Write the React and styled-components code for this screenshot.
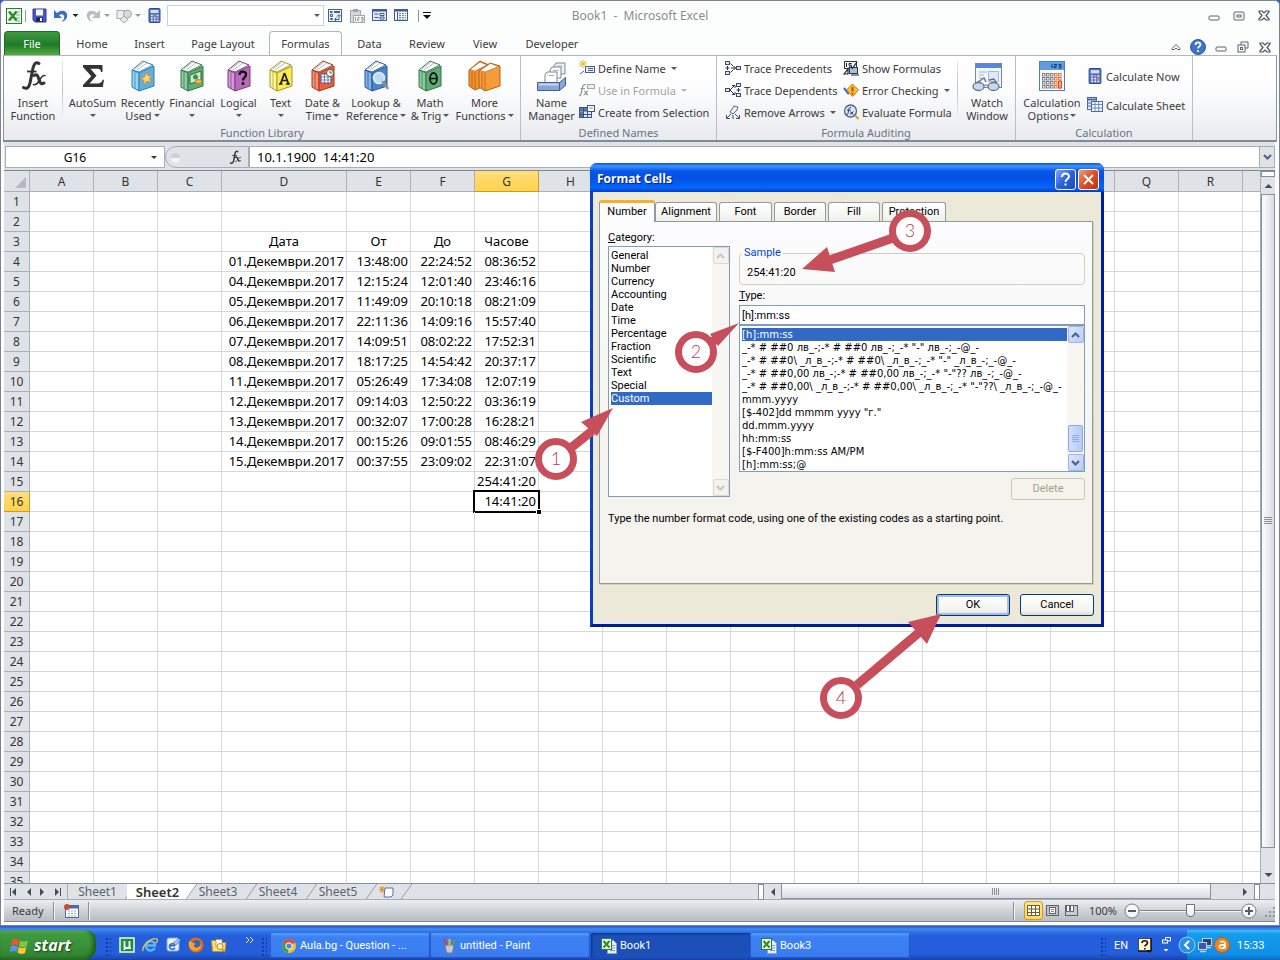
import React from "react";
import styled, { createGlobalStyle, css } from "styled-components";

const ui = `"Noto Sans", "Open Sans", sans-serif`;
const tahoma = `Roboto, "Noto Sans", sans-serif`;

const GlobalStyle = createGlobalStyle`
  *, *::before, *::after { box-sizing: border-box; }
  body { margin: 0; background: #245edb; font-family: ${ui}; font-size: 11px; color: #3b3b3b; overflow: hidden; }
  button, input, select { font: inherit; color: inherit; margin: 0; padding: 0; border: 0; background: none; border-radius: 0; }
  button { cursor: default; white-space: nowrap; }
  svg { display: block; flex: none; }
  ul { list-style: none; margin: 0; padding: 0; }
`;

const Page = styled.div`
  position: relative;
  height: 100vh;
  display: flex;
  flex-direction: column;
`;

const ExcelWindow = styled.main`
  flex: 1;
  min-height: 0;
  display: flex;
  flex-direction: column;
  background: #fcfdfd;
  border: 1px solid #7d8190;
  border-radius: 5px 5px 0 0;
  padding: 0 2px 3px;
`;

/* ---------- title bar ---------- */
const TitleBar = styled.header`
  display: grid;
  grid-template-columns: 1fr auto 1fr;
  align-items: center;
  height: 29px;
  flex: none;
`;
const Title = styled.h1`
  margin: 0;
  font-size: 12px;
  font-weight: 400;
  color: #8c8c8c;
  white-space: pre;
`;
const QuickAccess = styled.div`
  display: flex;
  align-items: center;
  padding-left: 2px;
`;
const QatButton = styled.button`
  width: ${(p) => p.$w}px;
  height: 20px;
  display: flex;
  align-items: center;
  justify-content: center;
  gap: 3px;
`;
const Divider = styled.span`
  width: 1px;
  height: 12px;
  background: #8e949c;
  margin: 0 3px;
`;
const Combo = styled.div`
  position: relative;
  width: 157px;
  margin: 0 3px;
  svg { position: absolute; right: 4px; top: 9px; pointer-events: none; }
`;
const ComboSelect = styled.select`
  display: block;
  width: 100%;
  height: 21px;
  appearance: none;
  background: #fff;
  border: 1px solid #ccd0d6;
`;
const WindowControls = styled.div`
  display: flex;
  justify-content: flex-end;
  align-items: center;
  gap: 9px;
  padding-right: ${(p) => p.$end}px;
  margin-left: auto;
`;
const ControlButton = styled.button`
  width: ${(p) => p.$w || 16}px;
  height: 16px;
  display: grid;
  place-items: center;
`;

/* ---------- ribbon ---------- */
const TabRow = styled.nav`
  display: flex;
  align-items: flex-end;
  height: 25px;
  flex: none;
  padding-left: 1px;
`;
const RibbonTab = styled.button`
  width: ${(p) => p.$w}px;
  height: 24px;
  text-align: center;
  ${(p) => p.$file && css`
    color: #fff;
    background: linear-gradient(#3f9a43, #1f7a28 55%, #52ad3f);
    border: 1px solid #1e6b27;
    border-bottom: 0;
    border-radius: 4px 4px 0 0;
    margin-right: 2px;
  `}
  ${(p) => p.$active && css`
    background: #fff;
    border: 1px solid #b0b6be;
    border-bottom: 0;
    border-radius: 4px 4px 0 0;
    margin-bottom: -1px;
    height: 25px;
    padding-bottom: 1px;
  `}
`;
const Ribbon = styled.section`
  display: flex;
  height: 87px;
  flex: none;
  border: 1px solid #8a919c;
  border-top-color: #b0b6be;
  border-bottom: 2px solid #838a94;
  background: linear-gradient(#fff 0, #fdfdfe 40%, #e7eaee 100%);
`;
const Group = styled.div`
  width: ${(p) => p.$w}px;
  display: flex;
  flex-direction: column;
  border-right: 1px solid #b9bec6;
`;
const GroupBody = styled.div`
  display: flex;
  flex: 1;
  padding-left: ${(p) => p.$pad || 0}px;
`;
const GroupLabel = styled.div`
  height: 16px;
  line-height: 16px;
  margin-bottom: -1px;
  text-align: center;
  color: #6b7280;
`;
const BigButton = styled.button`
  width: ${(p) => p.$w}px;
  height: 67px;
  display: flex;
  flex-direction: column;
  align-items: center;
  padding-top: 4px;
  line-height: 13px;
  svg.big { margin-bottom: 4px; }
`;
const LabelLine = styled.span`
  display: flex;
  align-items: center;
  justify-content: center;
  gap: 2px;
  height: 13px;
`;
const GroupSplit = styled.span`
  width: 1px;
  height: 56px;
  margin: 5px 4px 0 0;
  background: linear-gradient(#e9ebee, #b9bec6, #e9ebee);
`;
const SmallColumn = styled.div`
  width: ${(p) => p.$w}px;
  display: flex;
  flex-direction: column;
  padding-top: ${(p) => p.$top || 1}px;
  gap: ${(p) => p.$gap || 0}px;
`;
const SmallButton = styled.button`
  display: flex;
  align-items: center;
  gap: 3px;
  height: 22px;
  ${(p) => p.$muted && "color:#a3a3a3;"}
  svg + span + svg { margin-left: 2px; }
`;

/* ---------- formula bar ---------- */
const FormulaBar = styled.section`
  display: flex;
  height: 29px;
  flex: none;
  padding: 4px 0 3px 1px;
  margin: 0 2px 0 1px;
  background: #dfe3e8;
  border-bottom: 1px solid #7f8792;
`;
const NameBox = styled.div`
  display: flex;
  align-items: center;
  width: 160px;
  height: 22px;
  background: #fff;
  border: 1px solid #a6adb7;
`;
const NameInput = styled.input`
  width: 138px;
  margin-right: 6px;
  text-align: center;
  color: #000;
  font-size: 12px;
`;
const FxArea = styled.div`
  width: 84px;
  height: 22px;
  display: flex;
  align-items: center;
  justify-content: space-between;
  padding: 0 6px 0 4px;
  border: 1px solid #a6adb7;
  border-radius: 11px 0 0 11px;
  background: #dfe3e8;
`;
const FormulaInput = styled.input`
  flex: 1;
  height: 22px;
  padding-left: 7px;
  background: #fff;
  border: 1px solid #a6adb7;
  font-size: 13px;
  color: #000;
`;
const ExpandButton = styled.button`
  width: 15px;
  height: 22px;
  border: 1px solid #a6adb7;
  border-left: 0;
  display: grid;
  place-items: center;
`;

/* ---------- grid ---------- */
const SheetArea = styled.section`
  flex: 1;
  min-height: 0;
  display: flex;
  margin: 0 2px 0 1px;
`;
const GridView = styled.div`
  flex: 1;
  min-width: 0;
  overflow: hidden;
  background: #fff;
`;
const Table = styled.table`
  table-layout: fixed;
  border-collapse: separate;
  border-spacing: 0;
  width: 1303px;
  color: #000;
  font-size: 13px;
`;
const Head = styled.th`
  height: ${(p) => (p.$top ? 21 : 20)}px;
  padding: 0;
  font-size: 12px;
  font-weight: 400;
  line-height: 17px;
  color: #333;
  background: ${(p) => (p.$on ? "linear-gradient(#ffdf7d, #ffd24a)" : "#dfe3e8")};
  border-right: 1px solid ${(p) => (p.$on ? "#c99a2c" : "#aab0b9")};
  border-bottom: 1px solid ${(p) => (p.$on ? "#c99a2c" : "#aab0b9")};
`;
const Corner = styled(Head)`
  svg { margin: 2px 3px 0 auto; }
`;
const Cell = styled.td`
  position: relative;
  height: 20px;
  padding: 0 ${(p) => (p.$center ? 0 : 2)}px 0 0;
  line-height: 17px;
  white-space: nowrap;
  text-align: ${(p) => (p.$center ? "center" : "right")};
  border-right: 1px solid #d5d7db;
  border-bottom: 1px solid #d5d7db;
  ${(p) => p.$selected && css`
    &::after {
      content: "";
      position: absolute;
      inset: -2px;
      border: 2px solid #000;
    }
    &::before {
      content: "";
      position: absolute;
      right: -4px;
      bottom: -4px;
      width: 6px;
      height: 6px;
      z-index: 1;
      background: #000;
      border: 1px solid #fff;
    }
  `}
`;
const VScroll = styled.div`
  width: 15px;
  display: flex;
  flex-direction: column;
  align-items: center;
  background: #dfe3e8;
  border-left: 1px solid #a6adb7;
`;
const SplitHandle = styled.span`
  width: ${(p) => (p.$v ? 6 : 14)}px;
  height: ${(p) => (p.$v ? 16 : 6)}px;
  border: 1px solid #858c96;
  background: #fff;
  flex: none;
`;
const ArrowSlot = styled.button`
  width: ${(p) => p.$w || 14}px;
  height: ${(p) => p.$h || 17}px;
  display: grid;
  place-items: center;
  flex: none;
`;
const ScrollThumb = styled.div`
  flex: ${(p) => p.$grow};
  width: 14px;
  display: grid;
  place-items: center;
  border: 1px solid #8a919c;
  background: linear-gradient(90deg, #fdfdfe, #d8dce2);
`;
const ScrollGap = styled.span`
  flex: ${(p) => p.$grow};
`;

/* ---------- sheet tabs ---------- */
const TabStrip = styled.section`
  display: flex;
  align-items: stretch;
  height: 17px;
  flex: none;
  margin: 0 2px 0 1px;
  background: #dfe3e8;
  border-top: 1px solid #8a919c;
  border-bottom: 1px solid #a6adb7;
`;
const SheetNav = styled.div`
  display: flex;
  align-items: center;
  width: 64px;
  border-right: 1px solid #a6adb7;
`;
const SheetTab = styled.button`
  position: relative;
  width: ${(p) => p.$w || 60}px;
  font-size: ${(p) => (p.$on ? 13 : 12)}px;
  font-weight: ${(p) => (p.$on ? 600 : 400)};
  line-height: 14px;
  text-align: center;
  color: ${(p) => (p.$on ? "#333" : "#5b626c")};
  svg { margin: 0 auto; }
  ${(p) => p.$on && css`
    z-index: 1;
    &::before {
      content: "";
      position: absolute;
      z-index: -1;
      inset: 0 -9px 0 0;
      background: #fff;
      clip-path: polygon(0 0, 100% 0, calc(100% - 10px) 100%, 0 100%);
    }
  `}
  &::after {
    content: "";
    position: absolute;
    right: -4px;
    top: 0;
    width: 1px;
    height: 15px;
    background: #959ca6;
    transform: skewX(-35deg);
  }
`;
const HScroll = styled.div`
  display: flex;
  align-items: center;
  width: 517px;
  margin-left: auto;
  padding-right: 15px;
`;
const HThumb = styled.div`
  width: 430px;
  height: 15px;
  border: 1px solid #8a919c;
  border-top: 0;
  background: linear-gradient(#fdfdfe, #d8dce2);
  display: grid;
  place-items: center;
`;

/* ---------- status bar ---------- */
const StatusBar = styled.footer`
  display: flex;
  align-items: center;
  height: 22px;
  flex: none;
  margin: 0 2px 0 1px;
  padding-left: 8px;
  background: linear-gradient(#eceef1, #cdd0d5 55%, #b9bdc3);
  border-bottom: 1px solid #83888f;
`;
const StatusDivider = styled.span`
  width: 2px;
  height: 18px;
  border-left: 1px solid #8a9098;
  border-right: 1px solid #f2f3f5;
  margin: 0 9px;
`;
const ViewButton = styled.button`
  width: 19px;
  height: 19px;
  display: grid;
  place-items: center;
  border-radius: 3px;
  ${(p) => p.$on && "background: linear-gradient(#ffe48c, #ffd65a); border: 1px solid #c79a33;"}
`;
const ZoomArea = styled.div`
  display: flex;
  align-items: center;
  margin-left: auto;
`;
const ZoomLabel = styled.span`
  margin: 0 7px 0 8px;
`;
const ZoomRange = styled.input`
  appearance: none;
  width: 101px;
  height: 14px;
  background: linear-gradient(transparent 6px, #7f858e 6px, #7f858e 7px, #f3f4f6 7px, #f3f4f6 8px, transparent 8px);
  &::-webkit-slider-thumb {
    appearance: none;
    width: 9px;
    height: 13px;
    background: linear-gradient(#fff, #eceef1);
    border: 1px solid #6c727b;
    border-radius: 1px 1px 5px 5px;
  }
`;

/* ---------- dialog ---------- */
const Dialog = styled.section`
  position: absolute;
  left: 590px;
  top: 163px;
  width: 514px;
  font-family: ${tahoma};
  color: #000;
  line-height: 14px;
  background: #ece9d8;
  border: 3px solid;
  border-top: 0;
  border-color: #0a3fc4 #001d9c #001d9c #0a3fc4;
  border-radius: 7px 7px 0 0;
`;
const DialogTitle = styled.header`
  display: flex;
  align-items: center;
  height: 29px;
  margin: 0 -3px;
  padding: 3px 5px 0 7px;
  gap: 2px;
  border-radius: 7px 7px 0 0;
  background: linear-gradient(#0a50c8 0, #3d95ff 3px, #0a58e8 8px, #0450e0 50%, #0366ff 85%, #0340c0 100%);
  color: #fff;
  h2 { flex: 1; margin: 0; font: bold 12px/16px "Open Sans", ${ui}; text-shadow: 1px 1px 1px #0a1883; }
`;
const CaptionButton = styled.button`
  width: 21px;
  height: 21px;
  display: grid;
  place-items: center;
  border: 1px solid #fff;
  border-radius: 3px;
  background: ${(p) => (p.$close ? "linear-gradient(135deg,#f09a80,#dd4f27 50%,#b93412)" : "linear-gradient(135deg,#7fa5f5,#2c62dd 50%,#1c49c0)")};
`;
const DialogBody = styled.div`
  padding: 8px 8px 7px 6px;
  border: solid #dcebfb;
  border-width: 0 0 1px;
`;
const DialogTabs = styled.div`
  display: flex;
  align-items: flex-end;
  gap: 2px;
  height: 21px;
`;
const DialogTab = styled.button`
  width: ${(p) => p.$w}px;
  height: 19px;
  background: linear-gradient(#fff, #f0f0ea);
  border: 1px solid #919b9c;
  border-bottom: 0;
  border-radius: 3px 3px 0 0;
  ${(p) => p.$on && css`
    position: relative;
    height: 22px;
    margin: 0 -2px -1px 0;
    background: #fcfcfe;
    border-top: 3px solid #f5b02c;
    padding-bottom: 1px;
  `}
`;
const Panel = styled.div`
  padding: 9px 7px 57px 8px;
  background: linear-gradient(#fcfcfe, #f4f3ee 70%);
  border: 1px solid #919b9c;
  box-shadow: 1px 1px 0 #d0cebf;
`;
const Columns = styled.div`
  display: grid;
  grid-template-columns: 122px 1fr;
  gap: 9px;
`;
const FieldLabel = styled.label`
  display: block;
  height: 14px;
  margin-bottom: ${(p) => p.$gap || 1}px;
`;
const ListBox = styled.div`
  display: flex;
  height: ${(p) => p.$h}px;
  background: #fff;
  border: 1px solid #7f9db9;
  padding: 2px 0 0 2px;
  ul { flex: 1; min-width: 0; overflow: hidden; }
  ${(p) => p.$codes && `ul { font-family: "DejaVu Sans", ${tahoma}; font-size: 10px; }`}
`;
const Option = styled.li`
  height: 13px;
  line-height: 13px;
  white-space: pre;
  ${(p) => p.$on && "background:#316ac5; color:#fff;"}
`;
const XpScroll = styled.div`
  width: 17px;
  margin-top: -2px;
  display: flex;
  flex-direction: column;
  align-items: center;
  justify-content: space-between;
  background: #f7f6f1;
`;
const XpArrow = styled.button`
  width: 16px;
  height: 17px;
  display: grid;
  place-items: center;
  border: 1px solid ${(p) => (p.$off ? "#dcdad0" : "#9db5e6")};
  border-radius: 2px;
  background: ${(p) => (p.$off ? "#f3f2ec" : "linear-gradient(135deg,#dce6fd,#b6cbf9)")};
`;
const XpThumb = styled.div`
  width: 15px;
  height: 27px;
  margin: auto 0 2px;
  display: grid;
  place-items: center;
  border: 1px solid #8fa9e6;
  border-radius: 2px;
  background: linear-gradient(90deg, #d3defc, #b6cbf9);
`;
const Sample = styled.fieldset`
  height: 39px;
  margin: 15px 0 4px;
  padding: 6px 7px 0;
  border: 1px solid #d0d0bf;
  border-radius: 4px;
  legend { color: #0046d5; padding: 0 2px; margin-left: -5px; }
`;
const TypeInput = styled.input`
  display: block;
  width: 100%;
  height: 20px;
  padding: 0 2px;
  background: #fff;
  border: 1px solid #7f9db9;
`;
const XpButton = styled.button`
  display: block;
  width: 74px;
  height: 22px;
  border: 1px solid #003c74;
  border-radius: 3px;
  background: linear-gradient(#fff, #f3f2ec 80%, #dcd8cc);
  ${(p) => p.$focus && "box-shadow: inset 0 0 0 2px #a3bff0;"}
  ${(p) => p.$end && "margin: 6px 0 0 auto;"}
  &:disabled { color: #a1a192; border-color: #c9c7ba; background: #f5f4ea; }
`;
const Hint = styled.p`
  margin: 12px 0 0;
  white-space: nowrap;
`;
const DialogActions = styled.div`
  display: flex;
  justify-content: flex-end;
  gap: 10px;
  margin: 10px -1px 0 0;
`;

/* ---------- taskbar ---------- */
const Taskbar = styled.footer`
  display: flex;
  align-items: stretch;
  height: 34px;
  flex: none;
  font-family: ${tahoma};
  color: #fff;
  background: linear-gradient(#1e56c4 0, #3f8cf3 3px, #2f72e6 6px, #245edb 10px, #245edb 28px, #1941a5 100%);
`;
const StartButton = styled.button`
  display: flex;
  align-items: center;
  gap: 5px;
  width: 96px;
  margin-top: 4px;
  padding-left: 10px;
  border-radius: 0 10px 12px 0;
  background: linear-gradient(#6bb66a 0, #3f9a3f 4px, #388f38 60%, #2e7d2e 100%);
  box-shadow: inset -3px -1px 4px #1d5a1f;
  font: italic bold 16px/20px "Open Sans", ${ui};
  text-shadow: 1px 1px 2px #113c12;
`;
const Grip = styled.span`
  width: 5px;
  height: 18px;
  margin: 12px ${(p) => p.$after || 8}px 0 ${(p) => p.$before || 10}px;
  background: radial-gradient(circle at 1px 1px, #123f9c 1px, transparent 1px) 0 0 / 4px 4px;
`;
const QuickLaunch = styled.div`
  display: flex;
  align-items: center;
  gap: 7px;
  padding-top: 4px;
`;
const Tasks = styled.nav`
  display: flex;
  flex: 1;
  gap: 1px;
  padding: 7px 0 2px;
  min-width: 0;
`;
const Task = styled.button`
  display: flex;
  align-items: center;
  gap: 3px;
  flex: 0 1 159px;
  padding-left: 10px;
  border-radius: 2px;
  background: ${(p) => (p.$on ? "#1c50b8" : "linear-gradient(#5a9bfb, #3c81f3 4px, #3a7cf0)")};
  box-shadow: ${(p) => (p.$on ? "inset 1px 1px 2px #0c3180" : "inset -1px -1px 1px #2457c0")};
`;
const LangBar = styled.div`
  display: flex;
  align-items: center;
  gap: 10px;
  padding: 4px 16px 0 0;
`;
const Tray = styled.div`
  display: flex;
  align-items: center;
  gap: 1px;
  width: 93px;
  margin-top: 4px;
  background: linear-gradient(#3fc0f8, #139cec 4px, #0f8fe8 80%, #0c6cc0);
  svg:first-child { margin-left: -9px; }
  span { margin-left: 6px; }
`;

const CalloutSvg = styled.svg`
  position: absolute;
  pointer-events: none;
  font-family: Lato, ${ui};
  font-weight: 300;
  font-size: 18px;
`;

/* ---------- drawings ---------- */
const Caret = ({ c = "#555", w = 6 }) => (
  <svg width={w} height="3" viewBox="0 0 6 3" aria-hidden="true"><path d="M0 0h6L3 3z" fill={c} /></svg>
);
const Svg = ({ s = 16, w, h, vb, children, ...r }) => (
  <svg width={w || s} height={h || s} viewBox={vb || `0 0 ${w || s} ${h || s}`} fill="none" aria-hidden="true" {...r}>{children}</svg>
);
const Excel = () => (
  <Svg><rect x=".5" y=".5" width="15" height="15" fill="#eef7ec" stroke="#2b7a35" /><path d="M10 4h4M10 7h4M10 10h4M10 13h4" stroke="#7dbb7b" /><path d="M3 3.500l7.500 9M10.500 3.500 3 12.500" stroke="#2f8a2f" strokeWidth="2.600" /></Svg>
);
const ExcelDoc = () => (
  <Svg><path d="M6.500 2.500h6l3 3v10h-9z" fill="#e8eff9" stroke="#8aa2c8" /><path d="M11 7.500h3M11 10h3M9 12.500h5" stroke="#7d98c4" /><rect x=".5" y=".5" width="10" height="11" fill="#eef7ec" stroke="#2b7a35" /><path d="m2.500 3 6 6.500M8.500 3l-6 6.500" stroke="#2f8a2f" strokeWidth="2" /></Svg>
);
const Save = () => (
  <Svg s={15}><path d="M1 1h13v13H3l-2-2z" fill="#4a55c8" stroke="#2f3a9d" /><rect x="4" y="1.500" width="7" height="6" fill="#f4f6fd" /><rect x="4" y="9.500" width="7" height="4" fill="#1d2450" /><rect x="8" y="10" width="2" height="3" fill="#fff" /></Svg>
);
const Undo = ({ c = "#3a6fc4", flip }) => (
  <Svg><g transform={flip ? "translate(16 0) scale(-1 1)" : undefined}><path d="M1 2v8h8L6.200 7.200c2-1.800 5-1 5 1.800 0 2-1 3.500-3 5 4-1 6-3.500 6-6.500C14.200 3 8.500 1 4 5z" fill={c} /></g></Svg>
);
const Shapes = () => (
  <Svg><path d="M1 2.500h9v8H1z" fill="#eceef0" stroke="#a5a8ad" /><circle cx="11.500" cy="6" r="4" fill="#d7d9dc" stroke="#a5a8ad" /><path d="m8 8 4 3.500L8 15l-4-3.500z" fill="#e6e8ea" stroke="#a5a8ad" /></Svg>
);
const Calc = ({ s = 15 }) => (
  <Svg s={s} vb="0 0 15 15"><rect x="2" y=".5" width="11" height="14" rx="1" fill="#4f74bd" stroke="#304f91" /><rect x="3.500" y="2" width="8" height="3" fill="#cfe0fa" /><path d="M4 7.500h8M4 10h8M4 12.500h8" stroke="#f3f6fd" strokeWidth="1.500" strokeDasharray="1.700 1.200" /><path d="M6.900 7.500h2M9.800 10h2" stroke="#e36b63" strokeWidth="1.500" /></Svg>
);
const QatPivot = () => (
  <Svg s={15}><rect x=".5" y="1.500" width="13" height="12" fill="#eef3fb" stroke="#45608f" /><path d="M2 4h2.500M6 4h6" stroke="#45608f" strokeWidth="2" /><path d="M2.500 6.500h2v2h-2zM2.500 10.500h2v1h-2zM7 11.500h4V7M9 8.500l2-2 2 2M8.500 9.500l-2 2 2 2" stroke="#45608f" /></Svg>
);
const QatPaste = () => (
  <Svg><rect x="1.500" y="2.500" width="10" height="12" fill="#d5d7da" stroke="#a2a5a9" /><rect x="4" y="1" width="5" height="3" fill="#a2a5a9" /><rect x="4.500" y="7.500" width="11" height="7" fill="#f6f6f7" stroke="#a2a5a9" /><path d="M6.500 9v4M8.500 9.500H10v1.500H8.500v1.500H10M12 9.500h2V13h-2M12 11h2" stroke="#85888d" strokeWidth=".8" /></Svg>
);
const QatForm = () => (
  <Svg s={15}><rect x=".5" y="1.500" width="14" height="11" fill="#dfe9f8" stroke="#3f5c96" /><path d="M.5 2.500h14" stroke="#3f5c96" strokeWidth="2" /><path d="M2.500 6h4M2.500 9.500h4" stroke="#3f5c96" /><path d="M8 5.500h4v2H8zM8 9h4v2H8z" stroke="#3f5c96" fill="#fff" /></Svg>
);
const QatTable = () => (
  <Svg s={15}><rect x=".5" y="1.500" width="13" height="11" fill="#f3f7fd" stroke="#3f5c96" /><path d="M.5 2.500h13" stroke="#3f5c96" strokeWidth="2" /><path d="M3.500 4v8" stroke="#3f5c96" /><path d="M5 5.500h7M5 7.500h7M5 9.500h7M5 11.200h7" stroke="#6b86ba" strokeDasharray="2 1" /></Svg>
);
const MinGlyph = () => <Svg w={12} h={10}><rect x="1" y="5" width="10" height="4" rx="1" stroke="#5b6470" /></Svg>;
const MaxGlyph = () => <Svg w={12} h={10}><rect x="1" y="1" width="10" height="8" rx="1" stroke="#5b6470" /><rect x="4" y="4" width="4" height="2" stroke="#5b6470" /></Svg>;
const RestoreGlyph = () => <Svg w={12} h={12}><path d="M4 4V1h7v6H8" stroke="#5b6470" /><rect x="1" y="4" width="7" height="7" stroke="#5b6470" /><rect x="3.500" y="6.500" width="2" height="2" stroke="#5b6470" /></Svg>;
const CloseGlyph = () => <Svg w={12} h={11}><path d="M1 1h3l2 2 2-2h3v1L8 5.500 11 9v1H8L6 8l-2 2H1V9l3-3.500L1 2z" stroke="#4b5460" strokeWidth="1.200" /></Svg>;
const HelpGlyph = () => (
  <Svg><circle cx="8" cy="8" r="7.500" fill="#3f74c8" stroke="#2c5aa8" /><path d="M5.500 6c0-3.500 5-3.200 5-.4C10.500 7.500 8 7.500 8 9.500" stroke="#fff" strokeWidth="1.700" /><circle cx="8" cy="12" r="1.100" fill="#fff" /></Svg>
);

const Fx = ({ w = 28, h = 32, ...r }) => (
  <Svg w={w} h={h} vb="0 0 28 32" {...r}>
    <path d="M20 3.500c-3-2-5 0-6 4.500L11 23c-.9 4.500-3.500 6.500-6.500 4.500" stroke="#333" strokeWidth="3" strokeLinecap="round" />
    <path d="M8 11.500h9.500" stroke="#333" strokeWidth="1.800" />
    <path d="M15 15.500c3.500-2 4 1 5 4s2 5.500 5 3.500" stroke="#333" strokeWidth="3" strokeLinecap="round" />
    <path d="M26 15.500c-3-.6-4.500 3-6 5.500s-3 4.500-5.500 3.500" stroke="#333" strokeWidth="1.600" strokeLinecap="round" />
  </Svg>
);
const Sigma = () => (
  <Svg w={24} h={32} className="big"><path d="M2 5h19.500v7h-1.400c-.6-2.700-1.800-3.200-5-3.200H9.500l6 7-7 7.700h7.700c3.400 0 4.600-1.200 5.400-3.800H23L21.800 27H2v-2l8.300-8.800L2 7z" fill="#333" /></Svg>
);
const Book = ({ c, d, l, children }) => (
  <Svg w={26} h={32} className="big">
    <path d="M2 10 13 1l10 4L9 12z" fill="#fff" stroke={d} />
    <path d="m5 9 9-7M7 10l10-7" stroke="#b9bec5" />
    <path d="m2 10 7 3v18l-7-4z" fill={l} stroke={d} />
    <path d="M9 13 24 6v20L9 31z" fill={c} stroke={d} />
    <path d="M5 11.500v17" stroke={d} strokeWidth=".7" />
    {children}
  </Svg>
);
const books = {
  Recently: () => <Book c="#5fb0dc" d="#2f7fb0" l="#9ad3ee"><path d="m16.500 12 1.800 4 4.200-.8-3 3.300 2 4.500-4.300-2-3.500 4 .3-4.700-4-1.300 4.500-2z" fill="#ffd56e" stroke="#c8862a" strokeWidth=".8" /></Book>,
  Financial: () => <Book c="#5fae78" d="#34794a" l="#8fcba1"><path d="m11 15 11-4v9l-11 4z" fill="#cfe8c9" stroke="#2d6b3f" /><circle cx="16.500" cy="17" r="2.500" fill="#3e8f55" /><ellipse cx="19.500" cy="21.500" rx="3.500" ry="2" fill="#f0b83f" stroke="#a56f1c" strokeWidth=".7" /></Book>,
  Logical: () => <Book c="#b76bb8" d="#7f3d86" l="#d49ad4"><path d="M13.500 15c0-4.500 6.500-4.500 6.500-.5 0 3-3 3-3 6" stroke="#111" strokeWidth="2.300" /><circle cx="17" cy="23.500" r="1.500" fill="#111" /></Book>,
  Text: () => <Book c="#f8ec54" d="#a89a1e" l="#fbf6a0"><path d="m12.500 24 4-11M16.500 13l4 11" stroke="#222" strokeWidth="1.800" /><path d="M14 20.500h5M11 24h3.500M18 24h4" stroke="#222" strokeWidth="1.300" /></Book>,
  Date: () => <Book c="#ea5f38" d="#a8361a" l="#f29275"><path d="M11 14h10v9H11z" fill="#fff" stroke="#41609b" /><path d="M11 17h10M11 20h10M14.500 14v9M18 14v9" stroke="#41609b" strokeWidth=".7" /><circle cx="20" cy="13" r="3.500" fill="#fff" stroke="#555" /><path d="M20 11v2h2" stroke="#333" strokeWidth=".8" /></Book>,
  Lookup: () => <Book c="#4a86cc" d="#24549a" l="#86b4e6"><circle cx="16" cy="18" r="5.500" fill="#b9dcf6" stroke="#e3e9f1" strokeWidth="1.600" /><path d="m20 22 4.500 6" stroke="#8b9098" strokeWidth="2.600" strokeLinecap="round" /></Book>,
  Math: () => <Book c="#5fae78" d="#34794a" l="#8fcba1"><ellipse cx="16.500" cy="18.500" rx="3.500" ry="5.500" stroke="#111" strokeWidth="1.800" /><path d="M13.500 18.500h6" stroke="#111" strokeWidth="1.500" /></Book>,
};
const MoreBooks = () => (
  <Svg w={34} h={32} className="big">
    <path d="M1 10 12 1l9 4v19L7 30l-6-4z" fill="#f0932f" stroke="#b5621a" /><path d="M2 9.500 12 2l7 3L7 11z" fill="#fff" stroke="#b5621a" strokeWidth=".6" /><path d="M4 11.500V27M7 12v17" stroke="#b5621a" strokeWidth=".8" />
    <path d="m11 11 11-8 10 3v20l-15 5-6-4z" fill="#f79a3a" stroke="#b5621a" /><path d="m12 10.500 10.500-7 8 3L17 12z" fill="#fff" stroke="#b5621a" strokeWidth=".6" /><path d="M14 12v16M17 13v17" stroke="#b5621a" strokeWidth=".8" />
  </Svg>
);
const NameManager = () => (
  <Svg w={32} h={32} className="big">
    <path d="M20 3h9v11h-9l-2 1V6z" fill="#eef1f5" stroke="#7d8795" /><path d="M16 7h9v11h-9l-2 1V10z" fill="#f7f8fa" stroke="#7d8795" /><path d="M11 12h10v11H9v-8z" fill="#fff" stroke="#7d8795" /><path d="M21.500 6h5M17.500 10.500h5M12.500 15.500h6" stroke="#a8b0bc" />
    <path d="M1.500 22.500h22l6-5v8l-6 5h-22z" fill="#88a7d6" stroke="#41608f" /><path d="M23.500 22.500v8" stroke="#41608f" /><path d="M2.500 23.500h20v2h-20z" fill="#c3d5ee" />
  </Svg>
);
const DefineName = () => (
  <Svg><path d="M4 0v8M0 4h8M1 1l6 6M7 1 1 7" stroke="#e8b81f" /><rect x="6.500" y="6.500" width="9" height="6" fill="#e8eef8" stroke="#4a5f8c" /><path d="M9 8.500h5M9 10.500h5M1 14l4-3" stroke="#4a5f8c" /></Svg>
);
const UseFormula = () => (
  <Svg><path d="M7 3c-2-1-3 0-3.400 2L2 12c-.3 1.500-1 2-2 1.500M1.500 6.500H6M5 9c2 0 1.500 4 4 4M9 9c-2 0-2 4-4.500 4" stroke="#8d9096" strokeWidth="1.200" /><rect x="8.500" y="2.500" width="7" height="4" fill="#eee" stroke="#a3a6ab" /></Svg>
);
const CreateSel = () => (
  <Svg><rect x=".5" y="3.500" width="12" height="10" fill="#dfe7f4" stroke="#3d5482" /><path d="M1 4h11v3H1zM1 8h3v5H1z" fill="#5b76ab" /><path d="M1 7h12M1 10.500h12M4.500 4v9M8.500 4v9" stroke="#3d5482" /><rect x="8.500" y="1.500" width="7" height="6" fill="#fff" stroke="#3d5482" /><path d="M10 4h4" stroke="#7b8dae" /></Svg>
);
const Precedents = () => (
  <Svg><g fill="#dfe6f3" stroke="#3c4c6e"><rect x=".5" y="1.500" width="4" height="3" /><rect x=".5" y="11.500" width="4" height="3" /><rect x="11.500" y="6.500" width="4" height="3" /></g><path d="M2.500 6v4M.5 8h4M5.500 3.500 8 6M5.500 12.500 8 10M6 8h5M8.500 6l2 2-2 2" stroke="#26324f" /></Svg>
);
const Dependents = () => (
  <Svg><g fill="#dfe6f3" stroke="#3c4c6e"><rect x="11.500" y="1.500" width="4" height="3" /><rect x="11.500" y="11.500" width="4" height="3" /><rect x=".5" y="6.500" width="4" height="3" /></g><path d="M13.500 6v4M11.500 8h4M5 8l4-4M5 8l4 4M7 3.500h3V6M7 12.500h3V10" stroke="#26324f" /></Svg>
);
const RemoveArrows = () => (
  <Svg><path d="m5 8 4-6 4 1-1 3-4 4z" fill="#eef1f7" stroke="#56617c" /><path d="M6 10 2 14M1.500 11v3.500H5M8 11v4M10 10l4 4M14.500 11v3.500H11" stroke="#3c4c6e" /></Svg>
);
const ShowFormulas = () => (
  <Svg><rect x="1.500" y="1.500" width="12" height="7" fill="#eef2f9" stroke="#2c3750" /><path d="M3.500 3v4M8.500 3.500H6v1.700h2.500V7H6" stroke="#222" /><rect x="6.500" y="7.500" width="8" height="6" fill="#a9bde0" stroke="#2c3750" /><path d="m1 14 4-5v5zM8 15h8M14 2 9 9" stroke="#222" strokeWidth="1.200" /></Svg>
);
const ErrorCheck = () => (
  <Svg><path d="m1 6 4 5 5-8" stroke="#3f6dc0" strokeWidth="2.200" /><path d="m9.500 2 6 6-6 6.500-6-6.500z" fill="#fbc02c" stroke="#c27a10" /><path d="M9.500 5v4.500M9.500 10.800v1.700" stroke="#c0381a" strokeWidth="1.800" /></Svg>
);
const Evaluate = () => (
  <Svg><circle cx="7.500" cy="7" r="6" fill="#d7e6f8" stroke="#4a648f" strokeWidth="1.300" /><path d="M8 3.500C6 3 6 5 5.500 7S5 11 3.500 10.500M4 6h3.500M7 7.500l3.500 3M10.500 7.500l-3.500 3" stroke="#2c3750" /><path d="m12 11.500 3.500 3.500" stroke="#d79a2d" strokeWidth="2" /></Svg>
);
const Watch = () => (
  <Svg w={32} h={32} className="big"><rect x="4.500" y="3.500" width="26" height="24" fill="#f1f5fc" stroke="#6c86bb" /><path d="M5 4h25v4H5z" fill="#5a86d8" /><path d="M8 12h8M8 15h5M8 18h4" stroke="#9fb2d6" /><rect x="17.500" y="11.500" width="10" height="10" fill="#dfe8f7" stroke="#a9b9d8" /><path d="m4 24 9-6 2 4M26 24l-3-5-5 1" stroke="#69717e" strokeWidth="1.400" /><ellipse cx="7.500" cy="26.500" rx="5.500" ry="4" fill="#c3daf1" stroke="#6c7480" strokeWidth="1.300" /><ellipse cx="22.500" cy="26.500" rx="5.500" ry="4" fill="#c3daf1" stroke="#6c7480" strokeWidth="1.300" /><path d="M13 26c1-1.500 3-1.500 4 0" stroke="#6c7480" /></Svg>
);
const CalcOptions = () => (
  <Svg w={28} h={32} className="big"><rect x="1.500" y="1.500" width="25" height="29" fill="#fcfcfd" stroke="#4d7fc0" /><path d="M2 2h24v8H2z" fill="#5f9ce4" /><path d="M14 4v4M16 4.500h2.500V6H16v1.500h2.500M20.500 4.500H23V8h-2.500M20.500 6H23" stroke="#173a78" />{[13, 17, 21, 25].map((y) => [4, 8, 12, 16, 20].map((x) => <rect key={`${x}-${y}`} x={x + 0.5} y={y + 0.5} width="2.500" height="2.500" fill="#fff" stroke={x > 14 ? "#e0763a" : "#7b7f87"} />))}<path d="M20.500 21h3v7h-3z" fill="#f2a58f" stroke="#d8462a" /></Svg>
);
const CalcSheet = () => (
  <Svg><rect x=".5" y=".5" width="9" height="12" fill="#dfe9f8" stroke="#4c6ba6" /><path d="M1 2.500h9" stroke="#4c6ba6" strokeWidth="2" /><path d="M1 6h3M1 9h3" stroke="#4c6ba6" /><rect x="4.500" y="4.500" width="11" height="10" fill="#f6f9fe" stroke="#4c6ba6" /><path d="M5 7.500h10M5 11h10M8 5v9M11.700 5v9" stroke="#6f8cc2" /></Svg>
);
const Chevron = ({ up, c = "#4d6185" }) => <Svg w={9} h={6}><path d={up ? "m1 5 3.500-3.500L8 5" : "m1 1 3.500 3.500L8 1"} stroke={c} strokeWidth="2" /></Svg>;
const Tri = ({ dir, bar }) => {
  const d = { l: "M6 0v8L2 4z", r: "M1 0v8l4-4z", u: "M0 5h8L4 1z", d: "M0 1h8L4 5z" }[dir];
  const v = dir === "u" || dir === "d";
  return <Svg w={v ? 9 : 7} h={v ? 6 : 8} vb={v ? "0 0 8 6" : "0 0 7 8"}><path d={d} fill="#454b54" />{bar && <path d={dir === "l" ? "M.5 0v8" : "M6.500 0v8"} stroke="#454b54" />}</Svg>;
};

const bigButtons = [
  { w: 51, a: "AutoSum", caret: true, icon: <Sigma /> },
  { w: 49, a: "Recently", b: "Used", caret: true, icon: <books.Recently /> },
  { w: 50, a: "Financial", caret: true, icon: <books.Financial /> },
  { w: 43, a: "Logical", caret: true, icon: <books.Logical /> },
  { w: 41, a: "Text", caret: true, icon: <books.Text /> },
  { w: 43, a: "Date &", b: "Time", caret: true, icon: <books.Date /> },
  { w: 64, a: "Lookup &", b: "Reference", caret: true, icon: <books.Lookup /> },
  { w: 44, a: "Math", b: "& Trig", caret: true, icon: <books.Math /> },
  { w: 65, a: "More", b: "Functions", caret: true, icon: <MoreBooks /> },
];
const Big = ({ w, a, b, caret, icon }) => (
  <BigButton $w={w}>{icon}<LabelLine>{a}</LabelLine><LabelLine>{b && <span>{b}</span>}{caret && <Caret />}</LabelLine></BigButton>
);
const Small = ({ icon, text, caret, muted }) => (
  <SmallButton $muted={muted}>{icon}<span>{text}</span>{caret && <Caret c={muted ? "#b5b5b5" : "#555"} />}</SmallButton>
);

const columns = [..."ABCDEFGHIJKLMNOPQR", ""];
const cells = {
  3: ["Дата", "От", "До", "Часове"],
  4: ["01.Декември.2017", "13:48:00", "22:24:52", "08:36:52"],
  5: ["04.Декември.2017", "12:15:24", "12:01:40", "23:46:16"],
  6: ["05.Декември.2017", "11:49:09", "20:10:18", "08:21:09"],
  7: ["06.Декември.2017", "22:11:36", "14:09:16", "15:57:40"],
  8: ["07.Декември.2017", "14:09:51", "08:02:22", "17:52:31"],
  9: ["08.Декември.2017", "18:17:25", "14:54:42", "20:37:17"],
  10: ["11.Декември.2017", "05:26:49", "17:34:08", "12:07:19"],
  11: ["12.Декември.2017", "09:14:03", "12:50:22", "03:36:19"],
  12: ["13.Декември.2017", "00:32:07", "17:00:28", "16:28:21"],
  13: ["14.Декември.2017", "00:15:26", "09:01:55", "08:46:29"],
  14: ["15.Декември.2017", "00:37:55", "23:09:02", "22:31:07"],
  15: ["", "", "", "254:41:20"],
  16: ["", "", "", "14:41:20"],
};
const rows = Array.from({ length: 35 }, (_, i) => i + 1);

const categories = ["General", "Number", "Currency", "Accounting", "Date", "Time", "Percentage", "Fraction", "Scientific", "Text", "Special", "Custom"];
const formats = [
  "[h]:mm:ss",
  '_-* # ##0 лв_-;-* # ##0 лв_-;_-* "-" лв_-;_-@_-',
  '_-* # ##0\\ _л_в_-;-* # ##0\\ _л_в_-;_-* "-" _л_в_-;_-@_-',
  '_-* # ##0,00 лв_-;-* # ##0,00 лв_-;_-* "-"?? лв_-;_-@_-',
  '_-* # ##0,00\\ _л_в_-;-* # ##0,00\\ _л_в_-;_-* "-"??\\ _л_в_-;_-@_-',
  "mmm.yyyy",
  '[$-402]dd mmmm yyyy "г."',
  "dd.mmm.yyyy",
  "hh:mm:ss",
  "[$-F400]h:mm:ss AM/PM",
  "[h]:mm:ss;@",
];

function FormatCells() {
  return (
    <Dialog role="dialog" aria-label="Format Cells">
      <DialogTitle>
        <h2>Format Cells</h2>
        <CaptionButton aria-label="Help"><Svg w={13} h={15}><path d="M3 5c0-4.500 7-4.500 7-.5C10 7 6.500 7 6.500 10" stroke="#fff" strokeWidth="2" /><path d="M5.500 11.500h2v2h-2z" fill="#fff" /></Svg></CaptionButton>
        <CaptionButton $close aria-label="Close"><Svg s={13}><path d="m2 2 9 9M11 2l-9 9" stroke="#fff" strokeWidth="2" /></Svg></CaptionButton>
      </DialogTitle>
      <DialogBody>
        <DialogTabs>
          <DialogTab $on $w={56}>Number</DialogTab>
          <DialogTab $w={62}>Alignment</DialogTab>
          <DialogTab $w={53}>Font</DialogTab>
          <DialogTab $w={52}>Border</DialogTab>
          <DialogTab $w={52}>Fill</DialogTab>
          <DialogTab $w={64}>Protection</DialogTab>
        </DialogTabs>
        <Panel>
          <Columns>
            <div>
              <FieldLabel id="category"><u>C</u>ategory:</FieldLabel>
              <ListBox $h={251}>
                <ul role="listbox" aria-labelledby="category">
                  {categories.map((c) => <Option key={c} role="option" aria-selected={c === "Custom"} $on={c === "Custom"}>{c}</Option>)}
                </ul>
                <XpScroll>
                  <XpArrow $off aria-label="Up"><Chevron up c="#c9c7ba" /></XpArrow>
                  <XpArrow $off aria-label="Down"><Chevron c="#c9c7ba" /></XpArrow>
                </XpScroll>
              </ListBox>
            </div>
            <div>
              <Sample><legend>Sample</legend>254:41:20</Sample>
              <FieldLabel htmlFor="type" $gap={2}><u>T</u>ype:</FieldLabel>
              <TypeInput id="type" defaultValue="[h]:mm:ss" />
              <ListBox $h={147} $codes>
                <ul role="listbox" aria-label="Formats">
                  {formats.map((f, i) => <Option key={f} role="option" aria-selected={i === 0} $on={i === 0}>{f}</Option>)}
                </ul>
                <XpScroll>
                  <XpArrow aria-label="Up"><Chevron up /></XpArrow>
                  <XpThumb><Svg w={7} h={8}><path d="M0 .5h7M0 2.500h7M0 4.500h7M0 6.500h7" stroke="#8da9e8" /></Svg></XpThumb>
                  <XpArrow aria-label="Down"><Chevron /></XpArrow>
                </XpScroll>
              </ListBox>
              <XpButton disabled $end>Delete</XpButton>
            </div>
          </Columns>
          <Hint>Type the number format code, using one of the existing codes as a starting point.</Hint>
        </Panel>
        <DialogActions>
          <XpButton $focus>OK</XpButton>
          <XpButton>Cancel</XpButton>
        </DialogActions>
      </DialogBody>
    </Dialog>
  );
}

const callouts = [
  { n: 1, cx: 556, cy: 459, line: "M572 447 592 431", head: "613,408 581,422 597,436" },
  { n: 2, cx: 696, cy: 352, line: "M712 342 718 338", head: "739,323 710,334 718,346" },
  { n: 3, cx: 910, cy: 231, line: "M893 238 824 262", head: "802,269 827,247 835,272" },
  { n: 4, cx: 841, cy: 698, line: "M857 685 922 630", head: "941,614 908,622 927,644" },
];
function Callout({ n, cx, cy, line, head }) {
  const pts = head.split(" ").map((p) => p.split(",").map(Number));
  const xs = [cx - 22, cx + 22, ...pts.map((p) => p[0])];
  const ys = [cy - 22, cy + 22, ...pts.map((p) => p[1])];
  const x = Math.min(...xs), y = Math.min(...ys);
  const w = Math.max(...xs) - x, h = Math.max(...ys) - y;
  return (
    <CalloutSvg width={w} height={h} viewBox={`${x} ${y} ${w} ${h}`} style={{ left: x, top: y }}>
      <path d={line} stroke="#c64f5b" strokeWidth="9" />
      <polygon points={head} fill="#c64f5b" />
      <circle cx={cx} cy={cy} r="17.500" fill="#fff" stroke="#c64f5b" strokeWidth="7" />
      <text x={cx} y={cy + 6} textAnchor="middle" fill="#b8404e">{n}</text>
    </CalloutSvg>
  );
}

export default function App() {
  return (
    <Page>
      <GlobalStyle />
      <ExcelWindow>
        <TitleBar>
          <QuickAccess>
            <QatButton $w={17} aria-label="Excel"><Excel /></QatButton>
            <Divider />
            <QatButton $w={20} aria-label="Save"><Save /></QatButton>
            <QatButton $w={33} aria-label="Undo"><Undo /><Caret c="#222" w={7} /></QatButton>
            <QatButton $w={30} aria-label="Redo"><Undo c="#b9bcc1" flip /><Caret c="#999" /></QatButton>
            <QatButton $w={32} aria-label="Shapes"><Shapes /><Caret c="#999" /></QatButton>
            <QatButton $w={20} aria-label="Calculator"><Calc /></QatButton>
            <Combo><ComboSelect aria-label="Style" /><Caret w={6} /></Combo>
            <QatButton $w={16} aria-label="Pivot"><QatPivot /></QatButton>
            <QatButton $w={28} aria-label="Paste values"><QatPaste /></QatButton>
            <QatButton $w={16} aria-label="Form"><QatForm /></QatButton>
            <QatButton $w={28} aria-label="Table"><QatTable /></QatButton>
            <Divider />
            <QatButton $w={10} aria-label="Customize"><Svg w={8} h={7}><path d="M0 .5h8" stroke="#111" /><path d="M0 3h8L4 7z" fill="#111" /></Svg></QatButton>
          </QuickAccess>
          <Title>{"Book1  -  Microsoft Excel"}</Title>
          <WindowControls $end={5}>
            <ControlButton aria-label="Minimize"><MinGlyph /></ControlButton>
            <ControlButton aria-label="Maximize"><MaxGlyph /></ControlButton>
            <ControlButton aria-label="Close"><CloseGlyph /></ControlButton>
          </WindowControls>
        </TitleBar>
        <TabRow>
          <RibbonTab $file $w={56}>File</RibbonTab>
          <RibbonTab $w={60}>Home</RibbonTab>
          <RibbonTab $w={55}>Insert</RibbonTab>
          <RibbonTab $w={92}>Page Layout</RibbonTab>
          <RibbonTab $active $w={73}>Formulas</RibbonTab>
          <RibbonTab $w={55}>Data</RibbonTab>
          <RibbonTab $w={60}>Review</RibbonTab>
          <RibbonTab $w={56}>View</RibbonTab>
          <RibbonTab $w={78}>Developer</RibbonTab>
          <WindowControls $end={6}>
            <ControlButton $w={10} aria-label="Collapse ribbon"><Svg w={10} h={8}><path d="M1 5.500 5 1.500l4 4v1H6.500L5 5 3.500 6.500H1z" stroke="#5b6470" /></Svg></ControlButton>
            <ControlButton $w={16} aria-label="Help"><HelpGlyph /></ControlButton>
            <ControlButton $w={12} aria-label="Minimize workbook"><MinGlyph /></ControlButton>
            <ControlButton $w={13} aria-label="Restore workbook"><RestoreGlyph /></ControlButton>
            <ControlButton $w={13} aria-label="Close workbook"><CloseGlyph /></ControlButton>
          </WindowControls>
        </TabRow>
        <Ribbon>
          <Group $w={517}>
            <GroupBody>
              <Big w={58} a="Insert" b="Function" icon={<Fx className="big" />} />
              <GroupSplit />
              {bigButtons.map((b) => <Big key={b.a} {...b} />)}
            </GroupBody>
            <GroupLabel>Function Library</GroupLabel>
          </Group>
          <Group $w={196}>
            <GroupBody $pad={3}>
              <Big w={55} a="Name" b="Manager" icon={<NameManager />} />
              <SmallColumn $w={136}>
                <Small icon={<DefineName />} text="Define Name" caret />
                <Small icon={<UseFormula />} text="Use in Formula" caret muted />
                <Small icon={<CreateSel />} text="Create from Selection" />
              </SmallColumn>
            </GroupBody>
            <GroupLabel>Defined Names</GroupLabel>
          </Group>
          <Group $w={299}>
            <GroupBody $pad={8}>
              <SmallColumn $w={118}>
                <Small icon={<Precedents />} text="Trace Precedents" />
                <Small icon={<Dependents />} text="Trace Dependents" />
                <Small icon={<RemoveArrows />} text="Remove Arrows" caret />
              </SmallColumn>
              <SmallColumn $w={114}>
                <Small icon={<ShowFormulas />} text="Show Formulas" />
                <Small icon={<ErrorCheck />} text="Error Checking" caret />
                <Small icon={<Evaluate />} text="Evaluate Formula" />
              </SmallColumn>
              <GroupSplit />
              <Big w={50} a="Watch" b="Window" icon={<Watch />} />
            </GroupBody>
            <GroupLabel>Formula Auditing</GroupLabel>
          </Group>
          <Group $w={177}>
            <GroupBody $pad={1}>
              <Big w={70} a="Calculation" b="Options" caret icon={<CalcOptions />} />
              <SmallColumn $w={104} $top={9} $gap={7}>
                <Small icon={<Calc s={16} />} text="Calculate Now" />
                <Small icon={<CalcSheet />} text="Calculate Sheet" />
              </SmallColumn>
            </GroupBody>
            <GroupLabel>Calculation</GroupLabel>
          </Group>
        </Ribbon>
        <FormulaBar>
          <NameBox><NameInput aria-label="Name box" defaultValue="G16" /><Caret c="#333" w={8} /></NameBox>
          <FxArea><Svg s={11}><circle cx="5.500" cy="5.500" r="4.500" fill="#cdd1d7" /><path d="M1 6a4.500 4.500 0 0 0 9 0z" fill="#f4f5f7" /></Svg><Fx w={14} h={15} /></FxArea>
          <FormulaInput aria-label="Formula" defaultValue="10.1.1900  14:41:20" />
          <ExpandButton aria-label="Expand formula bar"><Chevron /></ExpandButton>
        </FormulaBar>
        <SheetArea>
          <GridView>
            <Table>
              <colgroup>
                <col style={{ width: 26 }} />
                {columns.map((c) => <col key={c} style={{ width: c === "D" ? 125 : 64 }} />)}
              </colgroup>
              <thead>
                <tr>
                  <Corner $top><Svg s={11}><path d="M11 0v11H0z" fill="#b4bac3" /></Svg></Corner>
                  {columns.map((c) => <Head key={c} $top $on={c === "G"}>{c}</Head>)}
                </tr>
              </thead>
              <tbody>
                {rows.map((r) => (
                  <tr key={r}>
                    <Head $on={r === 16}>{r}</Head>
                    {columns.map((c, i) => (
                      <Cell key={c} $center={r === 3} $selected={r === 16 && c === "G"}>{cells[r] && cells[r][i - 3]}</Cell>
                    ))}
                  </tr>
                ))}
              </tbody>
            </Table>
          </GridView>
          <VScroll>
            <SplitHandle />
            <ArrowSlot aria-label="Scroll up"><Tri dir="u" /></ArrowSlot>
            <ScrollThumb $grow={655}><Svg w={8} h={8}><path d="M0 .5h8M0 2.500h8M0 4.500h8M0 6.500h8" stroke="#8a919c" /></Svg></ScrollThumb>
            <ScrollGap $grow={18} />
            <ArrowSlot aria-label="Scroll down"><Tri dir="d" /></ArrowSlot>
          </VScroll>
        </SheetArea>
        <TabStrip>
          <SheetNav>
            <ArrowSlot $w={18} $h={15} aria-label="First sheet"><Tri dir="l" bar /></ArrowSlot>
            <ArrowSlot $w={13} $h={15} aria-label="Previous sheet"><Tri dir="l" /></ArrowSlot>
            <ArrowSlot $w={15} $h={15} aria-label="Next sheet"><Tri dir="r" /></ArrowSlot>
            <ArrowSlot $w={15} $h={15} aria-label="Last sheet"><Tri dir="r" bar /></ArrowSlot>
          </SheetNav>
          <SheetTab $w={59}>Sheet1</SheetTab>
          <SheetTab $on $w={61}>Sheet2</SheetTab>
          <SheetTab>Sheet3</SheetTab>
          <SheetTab>Sheet4</SheetTab>
          <SheetTab>Sheet5</SheetTab>
          <SheetTab $w={35} aria-label="Insert worksheet"><Svg w={16} h={14}><path d="M7 3h8v7l-2 2H6z" fill="#fff" stroke="#4c6ba6" /><path d="M4 1v7M1 4.500h6M2 2l4 5M6 2 2 7" stroke="#e08b1c" /></Svg></SheetTab>
          <HScroll>
            <SplitHandle $v />
            <ArrowSlot $w={17} $h={15} aria-label="Scroll left"><Tri dir="l" /></ArrowSlot>
            <HThumb><Svg w={8} h={7}><path d="M.5 0v7M2.500 0v7M4.500 0v7M6.500 0v7" stroke="#8a919c" /></Svg></HThumb>
            <ScrollGap $grow={1} />
            <ArrowSlot $w={17} $h={15} aria-label="Scroll right"><Tri dir="r" /></ArrowSlot>
            <SplitHandle $v />
          </HScroll>
        </TabStrip>
        <StatusBar>
          <span>Ready</span>
          <StatusDivider />
          <Svg w={15} h={14}><rect x="1.500" y="1.500" width="13" height="12" fill="#fff" stroke="#4c6ba6" /><path d="M2 3h12" stroke="#4c6ba6" strokeWidth="3" /><path d="M4 7h9M4 9.500h9M4 12h9" stroke="#8ea6d3" strokeDasharray="2 1" /><circle cx="3" cy="3" r="3" fill="#cf4a35" /></Svg>
          <StatusDivider />
          <ZoomArea>
            <StatusDivider />
            <ViewButton $on aria-label="Normal view"><Svg w={13} h={11}><path d="M.5.500h12v10H.500zM.500 4h12M.500 7.500h12M4.500.500v10M8.500.500v10" stroke="#6d5c2c" fill="#fff" /></Svg></ViewButton>
            <ViewButton aria-label="Page layout view"><Svg w={13} h={11}><rect x=".5" y=".5" width="12" height="10" fill="#bfc3c9" stroke="#5d636c" /><rect x="3.500" y="2.500" width="6" height="6" fill="#fff" stroke="#5d636c" /><path d="M5 4.500h3M5 6.500h3" stroke="#8a9098" /></Svg></ViewButton>
            <ViewButton aria-label="Page break view"><Svg w={13} h={11}><rect x=".5" y=".5" width="12" height="10" fill="#c9ccd2" stroke="#5d636c" /><path d="M1.500.500h3v6h-3zM5.500.500h3v6h-3z" fill="#fff" stroke="#5d636c" /></Svg></ViewButton>
            <ZoomLabel>100%</ZoomLabel>
            <Svg><circle cx="8" cy="8" r="7" fill="#f6f7f8" stroke="#767c85" /><path d="M4 8h8" stroke="#555b64" strokeWidth="2" /></Svg>
            <ZoomRange type="range" aria-label="Zoom" defaultValue="50" />
            <Svg><circle cx="8" cy="8" r="7" fill="#f6f7f8" stroke="#767c85" /><path d="M4 8h8M8 4v8" stroke="#555b64" strokeWidth="2" /></Svg>
            <Svg w={18} h={16}><path d="M16 4h2v2h-2zM16 8h2v2h-2zM12 8h2v2h-2zM16 12h2v2h-2zM12 12h2v2h-2zM8 12h2v2H8z" fill="#8f959e" /></Svg>
          </ZoomArea>
        </StatusBar>
      </ExcelWindow>
      <Taskbar>
        <StartButton>
          <Svg w={19} h={19}><path d="M2 4c3-2 5-1.500 7 0L8 9.500c-2-1.500-4-1.500-7 0z" fill="#ee5530" /><path d="M10 4.500c2 1.300 4 1.500 8 0l-1.500 6c-3 1.300-5 1-7.500-.5z" fill="#85c441" /><path d="M.8 10.500c3-1.500 5-1 7 0L6.500 16c-2-1.300-4-1.300-7 .5z" fill="#5a93f5" /><path d="M8.800 11c2 1.300 4.500 1.500 7.500 0L15 17c-3 1.500-5 1-7.500-.5z" fill="#fbc833" /></Svg>
          start
        </StartButton>
        <Grip />
        <QuickLaunch>
          <Svg><rect width="16" height="16" rx="1" fill="#1e8e3e" /><rect x="1" y="1" width="14" height="14" stroke="#e9f5ea" strokeWidth="1.500" /><path d="M5.500 13V4M5.500 9.500c.5 2 4.500 2 5 0V4M10.500 9v2h1.500" stroke="#fff" strokeWidth="1.800" /></Svg>
          <Svg><path d="M13 11c-4 5-10 1.500-9-3 1-5 9-5 9 .5H5" stroke="#5cb5f5" strokeWidth="2.500" /><path d="M1 14C-.5 10 9-.5 15 2c1 1 0 3-1 4" stroke="#f3c544" strokeWidth="1.300" /></Svg>
          <Svg><rect x="2" y="1" width="12" height="13" rx="2" fill="#e9f1fb" stroke="#7fa9dc" /><path d="M10 11c-2 2.500-6 1-5.500-2C5 6 9.500 6 9.500 8.800h-4" stroke="#2f6dc4" strokeWidth="1.600" /><path d="m8 6 6-4.500L15.500 3 11 8z" fill="#a7c8ee" stroke="#3c68a8" strokeWidth=".7" /></Svg>
          <Svg><circle cx="8" cy="8" r="7.500" fill="#e56a17" /><circle cx="8.500" cy="7" r="4" fill="#3763b8" /><path d="M1 4c2 0 3 2 5 2 2 .5 1 2-.5 2.500C7 12 12 11 12.500 7 14 11 11 14 7 14 3 13.500 0 10 1 4z" fill="#f8a12b" /></Svg>
          <Svg><path d="M.5 3.500h5l1.500 2h8l-1 9H1.500z" fill="#fbdc7c" stroke="#b98b2a" /><path d="M5 2.500h6v7H5z" fill="#fff" stroke="#b98b2a" strokeWidth=".7" /><circle cx="9" cy="9.500" r="3" fill="#fff3c4" stroke="#b98b2a" /><path d="m11 12 3 3" stroke="#b98b2a" strokeWidth="1.500" /></Svg>
          <Svg w={26} h={22}><path d="m12 3 3 3-3 3M16 3l3 3-3 3" stroke="#dce9ff" /></Svg>
        </QuickLaunch>
        <Grip $before={2} $after={4} />
        <Tasks>
          <Task><Svg><circle cx="8" cy="8" r="7" fill="#f2c12d" /><path d="M8 8 1.900 4.500a7 7 0 0 1 12.200 0z" fill="#df4a38" /><path d="M8 8 1.900 4.500a7 7 0 0 0 5 10.400z" fill="#3c9f52" /><circle cx="8" cy="8" r="3.200" fill="#4a86e0" stroke="#fff" /></Svg>Aula.bg - Question - ...</Task>
          <Task><Svg><path d="M4 7h9l-1.500 8h-6z" fill="#c3cad3" stroke="#717a86" /><path d="M6 7 3 1" stroke="#d23f2f" strokeWidth="2" /><path d="M8.500 7V1" stroke="#f1b62c" strokeWidth="2" /><path d="m11 7 3-5" stroke="#57a83b" strokeWidth="2" /></Svg>untitled - Paint</Task>
          <Task $on><ExcelDoc />Book1</Task>
          <Task><ExcelDoc />Book3</Task>
        </Tasks>
        <Grip $before={2} $after={8} />
        <LangBar>
          <span>EN</span>
          <Svg w={14} h={15}><rect width="13" height="13" fill="#fff8cf" stroke="#111" strokeWidth="1.500" /><path d="M4 5c0-3 5.500-3 5.500 0 0 1.800-2.700 1.700-2.700 3.500M6.800 10v1.500" stroke="#111" strokeWidth="1.600" /><path d="m8 12 4 3v-3z" fill="#111" /></Svg>
          <Svg w={9} h={18}><path d="M3.500 4V1.500h5V5H6" stroke="#fff" /><rect x=".5" y="4" width="5" height="3" stroke="#fff" /><path d="M1.500 13h5L4 15.500z" fill="#fff" /></Svg>
        </LangBar>
        <Tray>
          <Svg w={18} h={18}><circle cx="9" cy="9" r="8" fill="#2b8fe8" stroke="#8fd0fb" /><path d="M11 5 7 9l4 4" stroke="#fff" strokeWidth="2" /></Svg>
          <Svg><rect x="5.500" y="1.500" width="9" height="7" fill="#27407e" stroke="#c7cfdd" /><rect x="1.500" y="5.500" width="8" height="7" fill="#3c5ca8" stroke="#c7cfdd" /><path d="M3 14.500h6M10 10.500h4" stroke="#c7cfdd" strokeWidth="1.500" /></Svg>
          <Svg><circle cx="8" cy="8" r="7.500" fill="#f08020" stroke="#c95d10" /><path d="M6 5c4-1.500 5 0 5 2v4.500M11 8c-5-.5-6 .5-5.500 2.300.5 1.500 4 1.700 5.500-.8" stroke="#fff" strokeWidth="1.800" /></Svg>
          <span>15:33</span>
        </Tray>
      </Taskbar>
      <FormatCells />
      {callouts.map((c) => <Callout key={c.n} {...c} />)}
    </Page>
  );
}
